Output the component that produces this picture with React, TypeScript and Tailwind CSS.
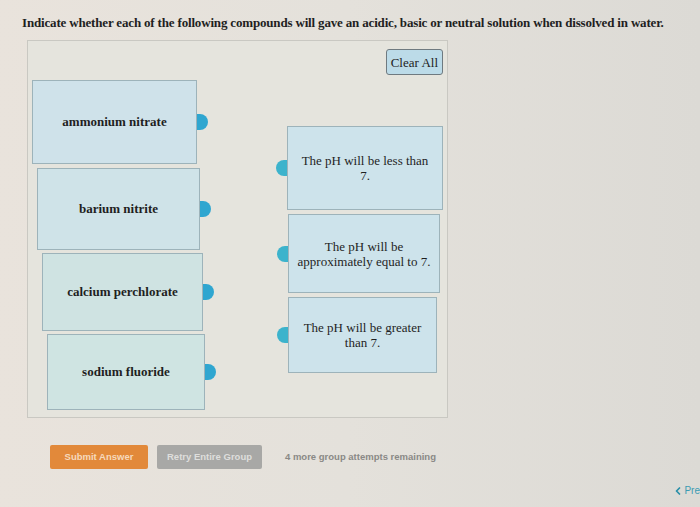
import React from 'react';
import { ChevronLeft } from 'lucide-react';

const serif = { fontFamily: '"Liberation Serif", "Times New Roman", serif' };

const compounds = [
  { label: 'ammonium nitrate', w: 'w-[165px]', h: 'h-[84px]', ml: 'ml-[4px]', mt: 'mt-0', bg: 'bg-[#cfe2ea]' },
  { label: 'barium nitrite', w: 'w-[163px]', h: 'h-[82px]', ml: 'ml-[9px]', mt: 'mt-[4px]', bg: 'bg-[#cfe3e8]' },
  { label: 'calcium perchlorate', w: 'w-[161px]', h: 'h-[78px]', ml: 'ml-[14px]', mt: 'mt-[3px]', bg: 'bg-[#cfe3e2]' },
  { label: 'sodium fluoride', w: 'w-[158px]', h: 'h-[76px]', ml: 'ml-[19px]', mt: 'mt-[3px]', bg: 'bg-[#cfe4e2]' },
];

const answers = [
  { text: 'The pH will be less than 7.', w: 'w-[156px]', h: 'h-[84px]', ml: 'ml-0', mt: 'mt-0', tw: 'w-[132px]' },
  { text: 'The pH will be approximately equal to 7.', w: 'w-[152px]', h: 'h-[79px]', ml: 'ml-[1px]', mt: 'mt-[4px]', tw: 'w-[140px]' },
  { text: 'The pH will be greater than 7.', w: 'w-[149px]', h: 'h-[76px]', ml: 'ml-[1px]', mt: 'mt-[4px]', tw: 'w-[122px]' },
];

function RightTab() {
  return (
    <span className="absolute right-[-12px] top-1/2 mt-[-8px] h-[16px] w-[11px] rounded-r-full bg-[#2fa6d0]" />
  );
}

function LeftTab() {
  return (
    <span className="absolute left-[-12px] top-1/2 mt-[-8px] h-[16px] w-[11px] rounded-l-full bg-[#3cb3cc]" />
  );
}

export default function App() {
  return (
    <div
      className="relative h-[507px] w-[700px] overflow-hidden bg-gradient-to-r from-[#e9e3dc] via-[#e4e1db] to-[#dcdad5] text-[#1f1f1f]"
      style={serif}
    >
      <h1 className="pl-[22px] pt-[15px] text-[13px] font-bold leading-[15px] tracking-[-0.17px]">
        Indicate whether each of the following compounds will gave an acidic, basic or neutral solution when dissolved in water.
      </h1>

      <section className="ml-[27px] mt-[10px] flex h-[378px] w-[421px] flex-col border border-[#c9c8c2] bg-[#e5e4dd]">
        <div className="flex justify-end pr-[4px] pt-[8px]">
          <button className="h-[26px] rounded-[3px] border border-[#6f7a80] bg-[#bcdbe8] px-[4px] text-[13px] leading-none text-[#222]">
            Clear All
          </button>
        </div>

        <div className="mt-[5px] flex">
          <div className="flex w-[220px] flex-col">
            {compounds.map((c) => (
              <div
                key={c.label}
                className={`relative flex items-center justify-center border border-[#9db3ba] ${c.w} ${c.h} ${c.ml} ${c.mt} ${c.bg}`}
              >
                <span className="text-[13px] font-bold">{c.label}</span>
                <RightTab />
              </div>
            ))}
          </div>

          <div className="ml-[39px] mt-[46px] flex flex-col">
            {answers.map((a) => (
              <div
                key={a.text}
                className={`relative flex items-center justify-center border border-[#9db3ba] bg-[#cde3eb] ${a.w} ${a.h} ${a.ml} ${a.mt}`}
              >
                <p className={`text-center text-[13px] leading-[15px] ${a.tw}`}>{a.text}</p>
                <LeftTab />
              </div>
            ))}
          </div>
        </div>
      </section>

      <div
        className="ml-[50px] mt-[27px] flex items-center"
        style={{ fontFamily: '"Liberation Sans", Arial, sans-serif' }}
      >
        <button className="h-[24px] w-[98px] rounded-[2px] bg-[#e2893a] text-[9.5px] font-bold text-[#f6d9bd]">
          Submit Answer
        </button>
        <button className="ml-[9px] h-[24px] w-[105px] rounded-[2px] bg-[#a8a8a6] text-[9.5px] font-bold text-[#dededc]">
          Retry Entire Group
        </button>
        <span className="ml-[23px] text-[9.5px] font-bold text-[#8a8986]">4 more group attempts remaining</span>
      </div>

      <div
        className="mt-[14px] flex items-center justify-end"
        style={{ fontFamily: '"Liberation Sans", Arial, sans-serif' }}
      >
        <ChevronLeft className="h-[16px] w-[12px] text-[#2a8fa8]" strokeWidth={3.5} />
        <span className="text-[10px] leading-none text-[#3b9bb3]">Pre</span>
      </div>
    </div>
  );
}
